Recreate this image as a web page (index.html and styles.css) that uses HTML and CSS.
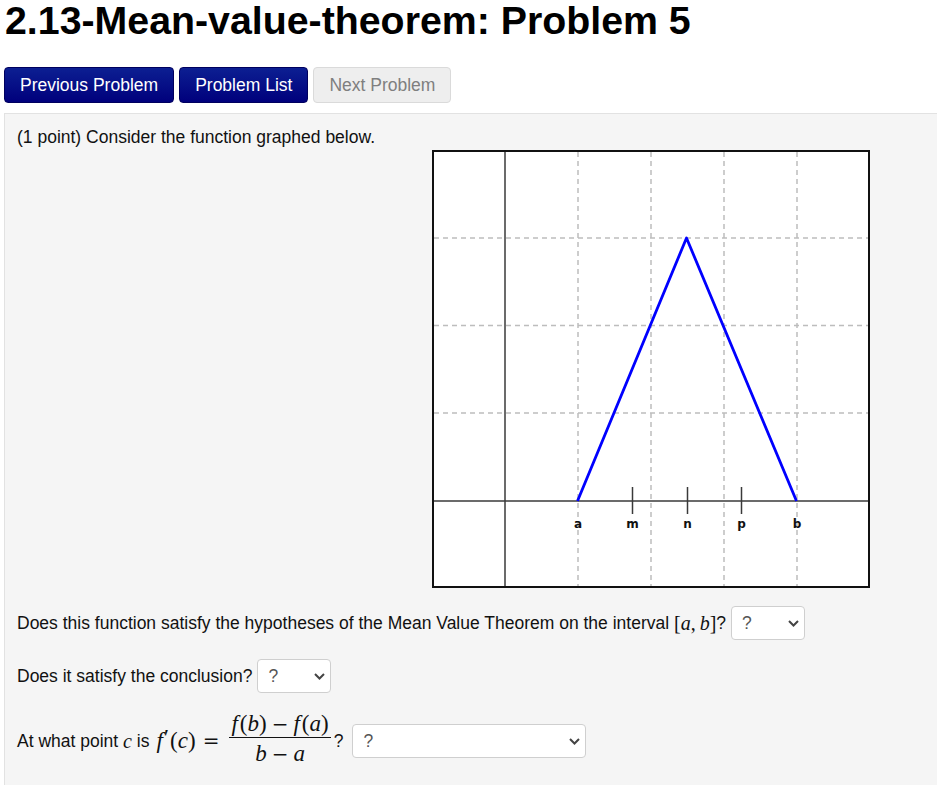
FILE: index.html
```html
<!DOCTYPE html>
<html>
<head>
<meta charset="utf-8">
<title>2.13-Mean-value-theorem: Problem 5</title>
<link rel="stylesheet" href="styles.css">
</head>
<body>
<div id="page">
  <h1 class="problem-title">2.13-Mean-value-theorem: Problem 5</h1>

  <div class="nav-buttons">
    <a class="nav-btn" href="#">Previous Problem</a>
    <a class="nav-btn" href="#">Problem List</a>
    <span class="nav-btn disabled">Next Problem</span>
  </div>

  <div class="problem">
    <p class="intro">(1 point) Consider the function graphed below.</p>

    <div class="graph">
      <svg width="438" height="438" viewBox="0 0 438 438">
        <rect x="0" y="0" width="438" height="438" fill="#fff"/>
        <!-- grid -->
        <g stroke="#bdbdbd" stroke-width="1.5" stroke-dasharray="5 4">
          <line x1="146" y1="2" x2="146" y2="436"/>
          <line x1="219" y1="2" x2="219" y2="436"/>
          <line x1="292" y1="2" x2="292" y2="436"/>
          <line x1="365" y1="2" x2="365" y2="436"/>
          <line x1="2" y1="88" x2="436" y2="88"/>
          <line x1="2" y1="175.5" x2="436" y2="175.5"/>
          <line x1="2" y1="263" x2="436" y2="263"/>
        </g>
        <!-- axes and ticks -->
        <g stroke="#3a3a3a" stroke-width="1.5">
          <line x1="73" y1="2" x2="73" y2="436"/>
          <line x1="2" y1="351" x2="436" y2="351"/>
          <line x1="200.5" y1="337" x2="200.5" y2="364"/>
          <line x1="255.5" y1="337" x2="255.5" y2="364"/>
          <line x1="309.5" y1="337" x2="309.5" y2="364"/>
        </g>
        <polyline points="145.5,351 254.5,88 364.5,351" fill="none" stroke="#0000ff" stroke-width="2.8" stroke-linejoin="round"/>
        <g class="tick-labels" text-anchor="middle">
          <text x="146" y="378">a</text>
          <text x="200.5" y="378">m</text>
          <text x="255.5" y="378">n</text>
          <text x="309.5" y="378">p</text>
          <text x="365" y="378">b</text>
        </g>
        <rect x="1" y="1" width="436" height="436" fill="none" stroke="#111" stroke-width="2"/>
      </svg>
    </div>

    <p class="question q-hyp">Does this function satisfy the hypotheses of the Mean Value Theorem on the interval&nbsp;<span class="math">[<i>a</i>,&thinsp;<i>b</i>]</span>?
      <span class="pick short">
        <select><option>?</option><option>Yes</option><option>No</option></select>
        <svg class="chev" width="11" height="7" viewBox="0 0 11 7"><polyline points="1,1 5.5,5.5 10,1" fill="none" stroke="#444" stroke-width="2"/></svg>
      </span>
    </p>

    <p class="question q-con">Does it satisfy the conclusion?
      <span class="pick short">
        <select><option>?</option><option>Yes</option><option>No</option></select>
        <svg class="chev" width="11" height="7" viewBox="0 0 11 7"><polyline points="1,1 5.5,5.5 10,1" fill="none" stroke="#444" stroke-width="2"/></svg>
      </span>
    </p>

    <p class="question q-point">At what point&nbsp;<span class="math"><i>c</i></span>&nbsp;is<span class="math big lead"><i class="fn">f</i><span class="prime">&prime;</span>(<i>c</i>)<span class="rel">=</span></span><span class="frac math big"><span class="num"><i class="fn">f</i>(<i>b</i>)<span class="bin">&minus;</span><i class="fn">f</i>(<i>a</i>)</span><span class="den"><i>b</i><span class="bin">&minus;</span><i>a</i></span></span>?
      <span class="pick long">
        <select><option>?</option><option>a</option><option>m</option><option>n</option><option>p</option><option>b</option><option>None</option></select>
        <svg class="chev" width="11" height="7" viewBox="0 0 11 7"><polyline points="1,1 5.5,5.5 10,1" fill="none" stroke="#444" stroke-width="2"/></svg>
      </span>
    </p>
  </div>
</div>
</body>
</html>
```

FILE: styles.css
```css
*{box-sizing:border-box;}
html{overflow:hidden;}
body{margin:0; background:#fff; color:#111; font-family:"Liberation Sans", Arial, sans-serif; font-size:17.5px;}
#page{padding-left:4px;}

.problem-title{margin:0; padding-left:1px; font-size:39.3px; line-height:40px; font-weight:bold; color:#000;}

.nav-buttons{display:flex; gap:5px; margin-top:27px;}
.nav-btn{display:block; height:36px; padding:7px 15px; line-height:20px; border:1px solid #00005e; border-radius:4px; color:#fff; text-decoration:none; background:linear-gradient(#0c1f92, #00007c);}
.nav-btn.disabled{background:#eee; border-color:#dadada; color:#7f7f7f;}

.problem{margin-top:10px; margin-right:-20px; padding:13px 0 30px 12px; background:#f5f5f5; border:1px solid #e2e2e2; border-right:none;}
.intro{margin:0; line-height:20px;}

.graph{margin:3px 0 0 415px; width:438px; height:438px;}
.graph svg{display:block;}
.tick-labels{font-family:"DejaVu Sans", sans-serif; font-weight:bold; font-size:12px; fill:#111;}

.question{display:flex; align-items:center; margin:0; line-height:20px; white-space:nowrap;}
.q-hyp{margin-top:18px;}
.q-con{margin-top:19px;}
.q-point{margin-top:19px;}

.math{font-family:"Liberation Serif", "Times New Roman", serif; font-size:20px;}
.math.big{font-size:23px;}
.math.lead{margin-left:7px;}
.math i{font-style:italic;}
.math .fn{padding-right:2px;}
.prime{font-family:"Liberation Serif", serif; font-size:24px; position:relative; top:-3px; margin:0 1px 0 -1px;}
.rel, .bin{font-family:"DejaVu Serif", serif; font-size:20px;}
.rel{margin:0 10px 0 7px;}
.bin{margin:0 5px;}
.frac{display:inline-flex; flex-direction:column; align-items:center; margin:0 3px 0 0; line-height:24px;}
.frac .num{padding:0 2px 1px; border-bottom:1.5px solid #111;}
.frac .den{padding:4px 0 3px;}

.pick{position:relative; display:block; margin-left:5px;}
.pick.long{margin-left:9px;}
.pick select{display:block; height:34px; padding:0 0 0 10px; border:1px solid #cfcfcf; border-radius:4px; background:#fff; color:#555; font-family:"Liberation Sans", Arial, sans-serif; font-size:17.5px; appearance:none; -webkit-appearance:none;}
.pick.short select{width:74px;}
.pick.long select{width:234px;}
.chev{position:absolute; right:6px; top:14px; pointer-events:none;}
```
